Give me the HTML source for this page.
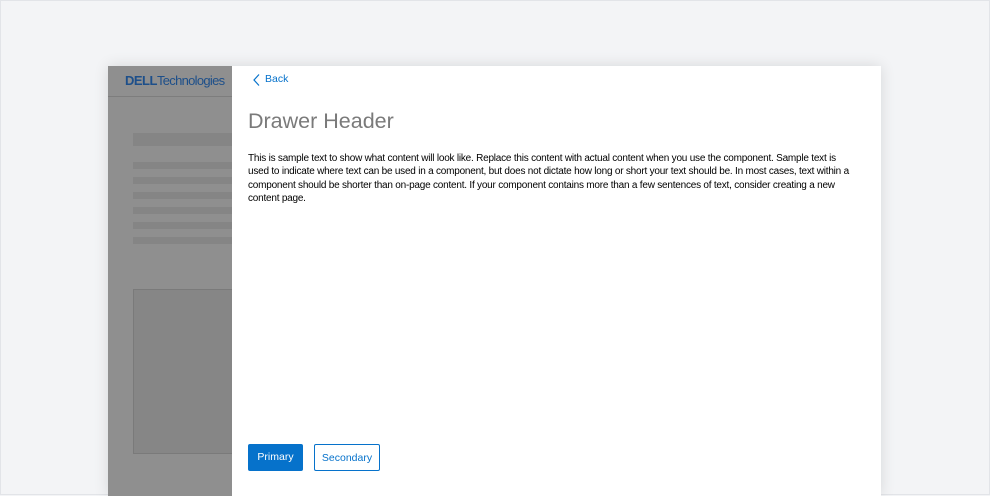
<!DOCTYPE html>
<html><head><style>
html,body{margin:0;padding:0}
body{width:990px;height:495px;background:#f3f4f6;position:relative;overflow:hidden;font-family:"Liberation Sans",Arial,sans-serif}
.frame{position:absolute;left:0;top:0;width:990px;height:495px;box-sizing:border-box;border:1px solid #e2e4e8}
.card{position:absolute;left:108px;top:66px;width:773px;height:430px;box-shadow:0 0 14px rgba(0,0,0,0.12)}
.gray{position:absolute;left:108px;top:66px;width:124px;height:430px;background:#8f8f8f}
.hdr{position:absolute;left:0;top:0;width:124px;height:30px;border-bottom:1px solid #7d7d7d}
.logo{position:absolute;left:17px;top:7px;font-size:13px;color:#1d4f8a;letter-spacing:-0.7px;white-space:nowrap}
.logo b{font-weight:bold;letter-spacing:-0.5px}
.bar{position:absolute;left:25px;background:#858585}
.box{position:absolute;left:25px;top:223px;width:99px;height:165px;background:#868686;border:1px solid #7a7a7a;border-right:none;box-sizing:border-box}
.drawer{position:absolute;left:232px;top:66px;width:649px;height:430px;background:#fff}
.back{position:absolute;left:20px;top:7px;color:#0672cb;font-size:10.5px}
.back svg{position:absolute;left:0;top:0}
.back span{position:absolute;left:13px;top:0;white-space:nowrap}
h1{position:absolute;left:16px;top:43px;margin:0;font-weight:300;font-size:21.5px;color:#7a7a7a;white-space:nowrap}
.txt{position:absolute;left:16px;top:86px;font-size:10px;letter-spacing:-0.22px;line-height:13.4px;color:#000;white-space:nowrap}
.btn{position:absolute;top:378px;height:27px;font-size:10.5px;line-height:27px;text-align:center;box-sizing:border-box;border-radius:2px}
.p{left:16px;width:55px;background:#0672cb;color:#fff}
.s{left:82px;width:66px;border:1px solid #0672cb;color:#0672cb;background:#fff}
</style></head><body>
<div class="frame"></div>
<div class="card"></div>
<div class="gray">
 <div class="hdr"><div class="logo"><b>DELL</b>Technologies</div></div>
 <div class="bar" style="top:67px;width:99px;height:13px"></div>
 <div class="bar" style="top:96px;width:99px;height:7px"></div>
 <div class="bar" style="top:111px;width:99px;height:7px"></div>
 <div class="bar" style="top:126px;width:99px;height:7px"></div>
 <div class="bar" style="top:141px;width:99px;height:7px"></div>
 <div class="bar" style="top:156px;width:99px;height:7px"></div>
 <div class="bar" style="top:171px;width:99px;height:7px"></div>
 <div class="box"></div>
</div>
<div class="drawer">
 <div class="back"><svg width="10" height="14" viewBox="0 0 10 14"><path d="M7 1.5 L2 7 L7 12.5" fill="none" stroke="#0672cb" stroke-width="1.2"/></svg><span>Back</span></div>
 <h1>Drawer Header</h1>
 <div class="txt">This is sample text to show what content will look like. Replace this content with actual content when you use the component. Sample text is<br>used to indicate where text can be used in a component, but does not dictate how long or short your text should be. In most cases, text within a<br>component should be shorter than on-page content. If your component contains more than a few sentences of text, consider creating a new<br>content page.</div>
 <div class="btn p">Primary</div>
 <div class="btn s">Secondary</div>
</div>
</body></html>
